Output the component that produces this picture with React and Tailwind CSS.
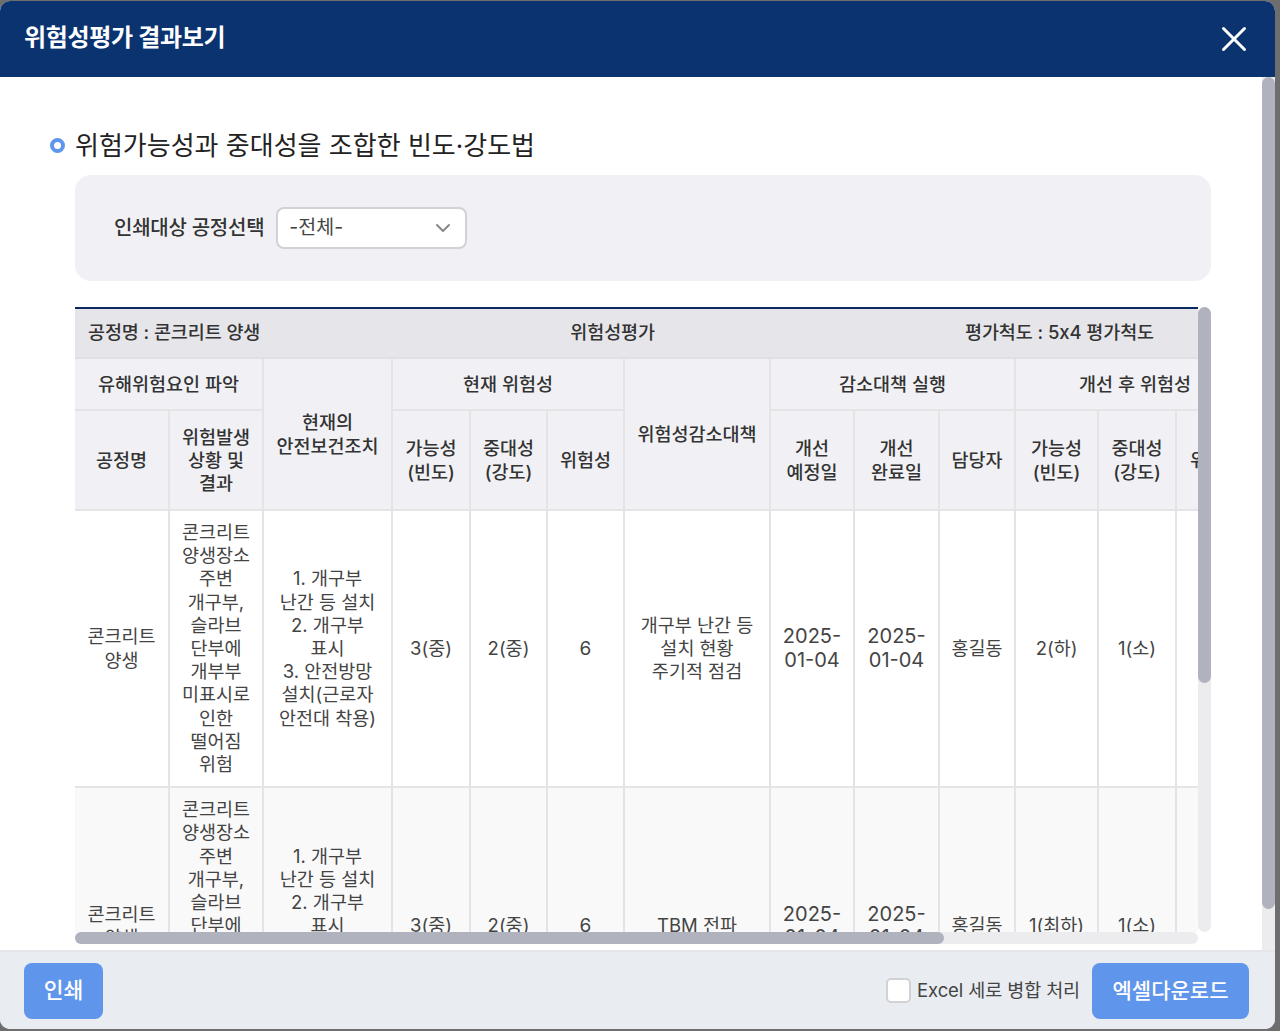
import { X, ChevronDown } from "lucide-react";

const HAZARD = "콘크리트 양생장소 주변 개구부, 슬라브 단부에 개부부 미표시로 인한 떨어짐 위험";
const MEASURES = ["1. 개구부", "난간 등 설치", "2. 개구부", "표시", "3. 안전방망", "설치(근로자", "안전대 착용)"];

const ROWS = [
  { reduce: ["개구부 난간 등", "설치 현황", "주기적 점검"], after: "2(하)", bg: "bg-white" },
  { reduce: ["TBM 전파"], after: "1(최하)", bg: "bg-[#f9f9f9]" },
];

const WIDTHS = [95, 94, 129, 78, 77, 77, 146, 84, 85, 76, 83, 78, 79];

const th = "border-r-2 border-b-2 border-[#e4e4e7] bg-[#f1f1f5] font-medium text-[#333] text-center align-middle px-1 pt-px";
const td = "border-r-2 border-b-2 border-[#e4e4e7] text-[#444] text-center align-middle px-2 py-[10px] break-keep font-normal";

const App = () => {
  return (
    <div className="w-[1280px] h-[1031px] bg-[#6e6e6e] pt-px pr-[5px] pb-[2px] overflow-hidden font-['Inter','Noto_Sans_CJK_KR',sans-serif]">
      <div className="h-full flex flex-col bg-white rounded-[10px] overflow-hidden">
        {/* Header */}
        <div className="h-[76px] shrink-0 bg-[#0a3370] flex items-center justify-between pl-6 pr-5">
          <h1 className="text-[24px] font-bold text-white tracking-[-0.3px] pb-[3px]">위험성평가 결과보기</h1>
          <button className="text-white">
            <X size={42} strokeWidth={1.7} />
          </button>
        </div>

        {/* Body */}
        <div className="flex-1 min-h-0 flex">
          <div className="flex-1 min-w-0 overflow-hidden pl-[50px] pt-[52px]">
            <div className="flex items-center gap-[10px] h-[32px]">
              <span className="w-[15px] h-[15px] rounded-full border-[4px] border-[#5f95ea] shrink-0" />
              <h2 className="text-[26px] text-[#222]">위험가능성과 중대성을 조합한 빈도·강도법</h2>
            </div>

            <div className="ml-[25px] w-[1136px] h-[106px] mt-[14px] bg-[#f1f1f5] rounded-[16px] flex items-center gap-[12px] pl-[39px]">
              <span className="text-[20px] font-medium text-[#333] tracking-[-0.25px] pb-px">인쇄대상 공정선택</span>
              <div className="w-[191px] h-[42px] bg-white border-2 border-[#d2d2d6] rounded-[8px] flex items-center justify-between pl-[11px] pr-[10px] text-[19.5px] text-[#444]">
                <span className="pb-px">-전체-</span>
                <ChevronDown size={24} className="text-[#888]" />
              </div>
            </div>

            {/* Table with its scrollbars */}
            <div className="ml-[25px] w-[1136px] mt-[26px] grid grid-cols-[1123px_13px] grid-rows-[625px_12px]">
              <div className="overflow-hidden border-t-2 border-[#0a2a5e] text-[18.5px] leading-[23.2px]">
                <div className="h-[50px] bg-[#e6e6ea] border-b-2 border-[#e0e0e3] flex items-center justify-between pl-[13px] pr-[44px] font-medium text-[#333] tracking-[-0.1px]">
                  <span>공정명 : 콘크리트 양생</span>
                  <span>위험성평가</span>
                  <span>평가척도 : 5x4 평가척도</span>
                </div>
                <table className="table-fixed border-separate border-spacing-0 w-[1181px]">
                  <colgroup>
                    {WIDTHS.map((w, i) => (
                      <col key={i} style={{ width: w }} />
                    ))}
                  </colgroup>
                  <thead>
                    <tr className="h-[52px]">
                      <th colSpan={2} className={th}>유해위험요인 파악</th>
                      <th rowSpan={2} className={th}>현재의<br />안전보건조치</th>
                      <th colSpan={3} className={th}>현재 위험성</th>
                      <th rowSpan={2} className={th}>위험성감소대책</th>
                      <th colSpan={3} className={th}>감소대책 실행</th>
                      <th colSpan={3} className={th}>개선 후 위험성</th>
                    </tr>
                    <tr className="h-[100px]">
                      <th className={th}>공정명</th>
                      <th className={th}>위험발생<br />상황 및<br />결과</th>
                      <th className={th}>가능성<br />(빈도)</th>
                      <th className={th}>중대성<br />(강도)</th>
                      <th className={th}>위험성</th>
                      <th className={th}>개선<br />예정일</th>
                      <th className={th}>개선<br />완료일</th>
                      <th className={th}>담당자</th>
                      <th className={th}>가능성<br />(빈도)</th>
                      <th className={th}>중대성<br />(강도)</th>
                      <th className={th}>위험성</th>
                    </tr>
                  </thead>
                  <tbody>
                    {ROWS.map((row, i) => (
                      <tr key={i} className={row.bg}>
                        <td className={td}>콘크리트<br />양생</td>
                        <td className={td}>{HAZARD}</td>
                        <td className={td}>
                          {MEASURES.map((m) => (
                            <div key={m}>{m}</div>
                          ))}
                        </td>
                        <td className={td}>3(중)</td>
                        <td className={td}>2(중)</td>
                        <td className={`${td} text-[19px]`}>6</td>
                        <td className={td}>
                          {row.reduce.map((r) => (
                            <div key={r}>{r}</div>
                          ))}
                        </td>
                        <td className={`${td} text-[20px]`}>2025-<br />01-04</td>
                        <td className={`${td} text-[20px]`}>2025-<br />01-04</td>
                        <td className={td}>홍길동</td>
                        <td className={td}>{row.after}</td>
                        <td className={td}>1(소)</td>
                        <td className={td}>2</td>
                      </tr>
                    ))}
                  </tbody>
                </table>
              </div>

              {/* Vertical scrollbar */}
              <div className="bg-[#ececee] rounded-full">
                <div className="h-[376px] bg-[#b0b2bd] rounded-full" />
              </div>
              {/* Horizontal scrollbar */}
              <div className="bg-[#ececee] rounded-full col-span-2 w-[1123px]">
                <div className="w-[869px] h-full bg-[#b0b2bd] rounded-full" />
              </div>
            </div>
          </div>

          {/* Page scrollbar */}
          <div className="w-[13px] shrink-0 bg-[#ececee]">
            <div className="h-[832px] bg-[#b0b2bd] rounded-full" />
          </div>
        </div>

        {/* Footer */}
        <div className="h-[79px] shrink-0 bg-[#e9ecf1] border-t-2 border-[#e4e6ea] flex items-center justify-between pl-6 pr-[26px]">
          <button className="w-[79px] h-[56px] bg-[#5f95ea] rounded-[8px] text-white text-[21.5px] font-medium">인쇄</button>
          <div className="flex items-center">
            <span className="w-[25px] h-[25px] bg-white border-2 border-[#d2d2d6] rounded-[5px]" />
            <span className="ml-[6px] text-[18.5px] text-[#444] tracking-[-0.1px]">Excel 세로 병합 처리</span>
            <button className="ml-3 w-[157px] h-[56px] bg-[#5f95ea] rounded-[8px] text-white text-[21px] font-medium">엑셀다운로드</button>
          </div>
        </div>
      </div>
    </div>
  );
};

export default App;
